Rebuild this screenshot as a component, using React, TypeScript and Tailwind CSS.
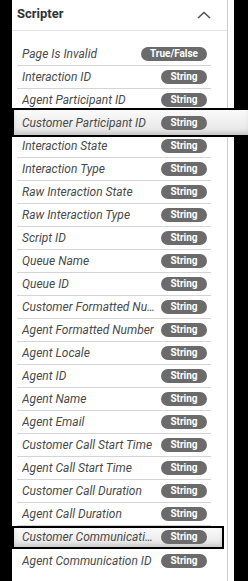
import React from 'react';

type Field = { label: string; type: string; mark?: 'wide' | 'narrow' };

const FIELDS: Field[] = [
  { label: 'Page Is Invalid', type: 'True/False' },
  { label: 'Interaction ID', type: 'String' },
  { label: 'Agent Participant ID', type: 'String' },
  { label: 'Customer Participant ID', type: 'String', mark: 'wide' },
  { label: 'Interaction State', type: 'String' },
  { label: 'Interaction Type', type: 'String' },
  { label: 'Raw Interaction State', type: 'String' },
  { label: 'Raw Interaction Type', type: 'String' },
  { label: 'Script ID', type: 'String' },
  { label: 'Queue Name', type: 'String' },
  { label: 'Queue ID', type: 'String' },
  { label: 'Customer Formatted Number', type: 'String' },
  { label: 'Agent Formatted Number', type: 'String' },
  { label: 'Agent Locale', type: 'String' },
  { label: 'Agent ID', type: 'String' },
  { label: 'Agent Name', type: 'String' },
  { label: 'Agent Email', type: 'String' },
  { label: 'Customer Call Start Time', type: 'String' },
  { label: 'Agent Call Start Time', type: 'String' },
  { label: 'Customer Call Duration', type: 'String' },
  { label: 'Agent Call Duration', type: 'String' },
  { label: 'Customer Communication ID', type: 'String', mark: 'narrow' },
  { label: 'Agent Communication ID', type: 'String' },
];

const FieldRow: React.FC<{ field: Field; last: boolean }> = ({ field, last }) => (
  <div className={`relative flex items-center h-[23px] pl-[5px] pr-[4px] ${last ? '' : 'border-b border-[#d4d4d4]'}`}>
    {/* annotation frame drawn over the screenshot */}
    {field.mark === 'wide' && (
      <div className="absolute left-[-5px] right-[-38px] top-[-4px] bottom-[-3px] border-y-2 border-l-2 border-black bg-gradient-to-b from-[#fafafa] to-[#e4e4e4] shadow-[inset_0_-3px_4px_rgba(0,0,0,0.12)]" />
    )}
    {field.mark === 'narrow' && (
      <div className="absolute left-[-5px] right-[-13px] top-[0px] bottom-[-1px] border-2 border-black bg-gradient-to-b from-[#fafafa] to-[#e6e6e6] shadow-[inset_0_-3px_4px_rgba(0,0,0,0.12)]" />
    )}
    <span className="relative flex-1 min-w-0 truncate italic text-[12px] text-[#4a4a4a] pr-[4px]">
      {field.label}
    </span>
    <span className="relative shrink-0 rounded-full bg-[#6b6b6b] text-white font-bold text-[10px] leading-[14px] h-[14px] px-[9px] min-w-[46px] text-center">
      {field.type}
    </span>
  </div>
);

export default function App() {
  return (
    <div className="w-[248px] h-[581px] bg-black flex overflow-hidden font-['Roboto',sans-serif]">
      <div className="w-[12px] shrink-0" />
      <div className="w-[222px] shrink-0 bg-white flex">
        <div className="w-[216px] border-r border-[#cfcfcf]">
          <div className="flex items-center justify-between h-[31px] pl-[5px] pr-[16px] pb-[3px] border-b border-[#e3e3e3]">
            <span className="text-[13px] font-bold text-[#333]">Scripter</span>
            <svg width="14" height="8" viewBox="0 0 14 8" fill="none" className="mt-[2px]">
              <path d="M1 7 L7 1.5 L13 7" stroke="#555" strokeWidth="1.6" />
            </svg>
          </div>
          <div className="pt-[12px] pl-[5px] pr-[16px]">
            {FIELDS.map((f, i) => (
              <FieldRow key={f.label} field={f} last={i === FIELDS.length - 1} />
            ))}
          </div>
        </div>
      </div>
    </div>
  );
}
